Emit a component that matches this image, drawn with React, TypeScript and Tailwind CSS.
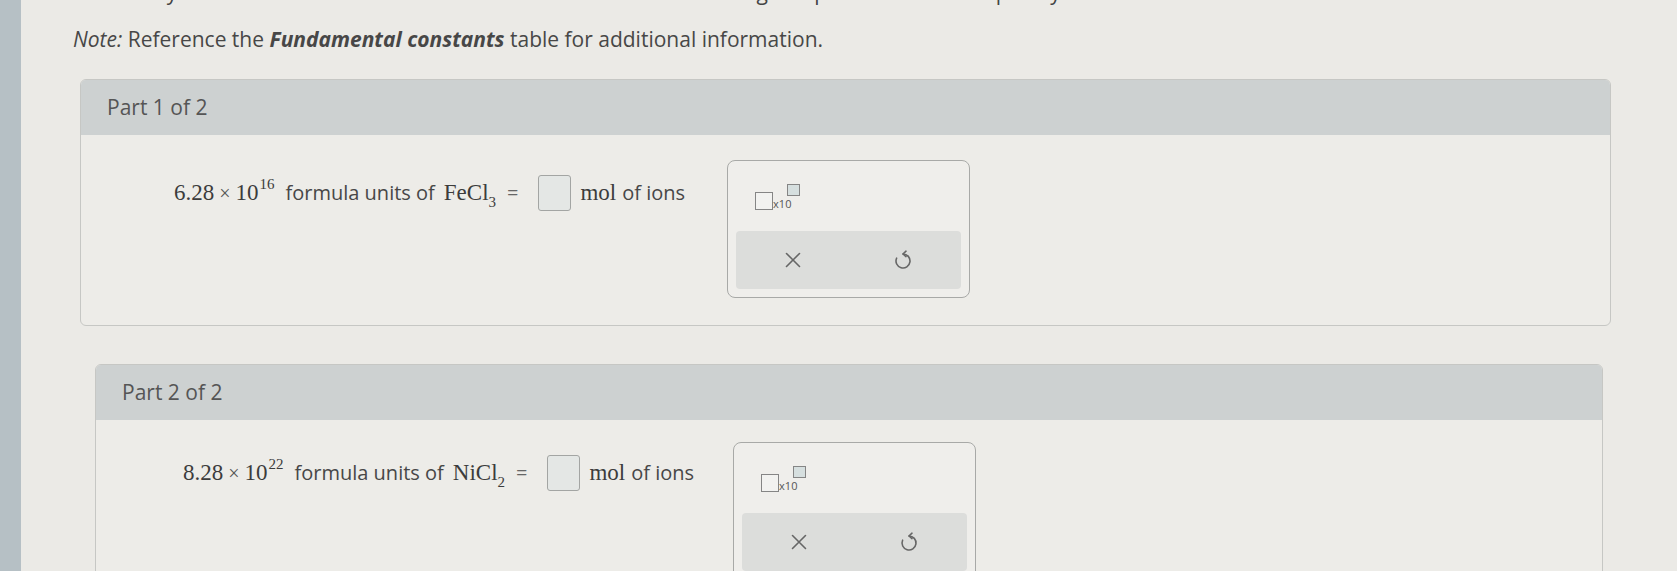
import React from "react";

type Part = {
  label: string;
  coeff: string;
  exp: string;
  formula: string;
  sub: string;
};

const parts: Part[] = [
  { label: "Part 1 of 2", coeff: "6.28", exp: "16", formula: "FeCl", sub: "3" },
  { label: "Part 2 of 2", coeff: "8.28", exp: "22", formula: "NiCl", sub: "2" },
];

const UndoIcon = () => (
  <svg width="20" height="24" viewBox="0 0 20 24" fill="none" stroke="#666" strokeWidth="1.6" strokeLinecap="round" strokeLinejoin="round">
    <path d="M10 6 A7 7 0 1 1 3.6 10.2" />
    <path d="M13 3.2 L10 6 L13 8.6" />
  </svg>
);

const CloseIcon = () => (
  <svg width="18" height="18" viewBox="0 0 18 18" stroke="#666" strokeWidth="1.6" strokeLinecap="round">
    <path d="M2.5 2.5 L15.5 15.5 M15.5 2.5 L2.5 15.5" />
  </svg>
);

const AnswerPanel = () => (
  <div className="w-[243px] h-[138px] shrink-0 rounded-[8px] border border-[#a8a9a7] bg-[#efeeeb] flex flex-col justify-between p-[8px]">
    <div className="flex items-end pl-[19px] pt-[23px]">
      <div className="w-[18px] h-[18px] border-[1.5px] border-[#858585] bg-[#f2f2f0]" />
      <span className="text-[11px] leading-none text-[#555] font-['Open_Sans'] mb-[1px]">x10</span>
      <div className="w-[13px] h-[12px] border-[1.5px] border-[#858585] bg-[#d6dfdf] self-start -mt-[8px] -ml-[4px]" />
    </div>
    <div className="h-[58px] rounded-[4px] bg-[#dcdddb] flex items-center justify-between px-[48px]">
      <CloseIcon />
      <UndoIcon />
    </div>
  </div>
);

const Equation = ({ p }: { p: Part }) => (
  <div className="flex items-center text-[#3c3c3c] whitespace-nowrap">
    <span className="font-['Liberation_Serif'] text-[23px]">{p.coeff}</span>
    <span className="font-['Liberation_Serif'] text-[20px] mx-[5px] text-[#555]">×</span>
    <span className="font-['Liberation_Serif'] text-[23px]">10</span>
    <span className="font-['Liberation_Serif'] text-[15px] self-start -mt-[2px] ml-[1px]">{p.exp}</span>
    <span className="font-['Open_Sans'] text-[20px] ml-[11px] text-[#474747]">formula units of</span>
    <span className="font-['Liberation_Serif'] text-[23px] ml-[9px]">{p.formula}</span>
    <span className="font-['Liberation_Serif'] text-[15px] self-end -mb-[2px]">{p.sub}</span>
    <span className="font-['Open_Sans'] text-[20px] ml-[11px] text-[#666]">=</span>
    <div className="w-[33px] h-[36px] ml-[20px] rounded-[3px] border-[1.5px] border-[#a3a5a3] bg-[#e4e7e5]" />
    <span className="font-['Liberation_Serif'] text-[23px] ml-[9px]">mol</span>
    <span className="font-['Open_Sans'] text-[20px] ml-[6px] text-[#474747]">of ions</span>
  </div>
);

type CardProps = {
  p: Part;
  className: string;
  bodyClass: string;
  eqClass: string;
};

const PartCard = ({ p, className, bodyClass, eqClass }: CardProps) => (
  <div className={"rounded-[6px] border border-[#c6c7c4] overflow-hidden bg-[#edece8] " + className}>
    <div className="h-[55px] bg-[#cdd1d1] flex items-center pl-[26px] font-['Open_Sans'] text-[21px] text-[#555]">
      {p.label}
    </div>
    <div className={"flex items-start " + bodyClass}>
      <div className={eqClass}>
        <Equation p={p} />
      </div>
      <AnswerPanel />
    </div>
  </div>
);

export default function App() {
  return (
    <div className="w-full h-[571px] overflow-hidden bg-[#ebeae6] flex font-['Open_Sans']">
      <div className="w-[21px] shrink-0 bg-[#b6c0c5]" />
      <div className="flex-1 pr-[66px]">
        <div className="-mt-[22px] pl-[52px] text-[21px] leading-[28px] text-[#444] whitespace-nowrap">
          How many <b>total moles</b> of ions are released when each of the following samples dissolves completely in water?
        </div>
        <div className="mt-[19px] pl-[52px] text-[21px] leading-[28px] text-[#474747] whitespace-nowrap">
          <i>Note:</i> Reference the <b><i>Fundamental constants</i></b> table for additional information.
        </div>
        <PartCard
          p={parts[0]}
          className="mt-[26px] ml-[59px]"
          bodyClass="h-[190px] pt-[25px] pl-[93px] gap-[42px]"
          eqClass="pt-[15px]"
        />
        <PartCard
          p={parts[1]}
          className="mt-[38px] ml-[74px] mr-[8px]"
          bodyClass="h-[190px] pt-[22px] pl-[87px] gap-[39px]"
          eqClass="pt-[13px]"
        />
      </div>
    </div>
  );
}
